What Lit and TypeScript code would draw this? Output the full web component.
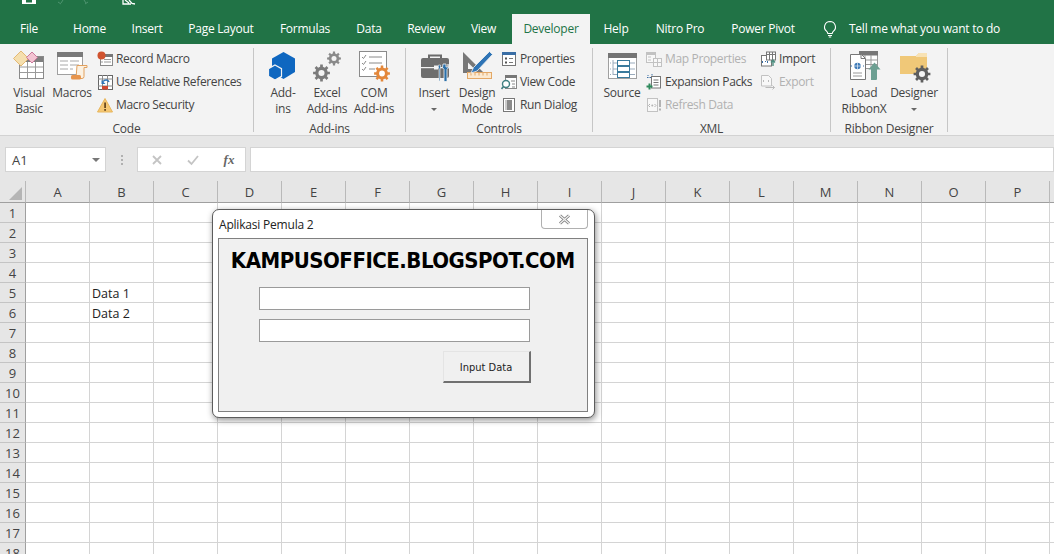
import { LitElement, html, css, svg } from "lit";
import { customElement } from "lit/decorators.js";

const gear = (cx: number, cy: number, r: number, color: string, hole = "#f3f3f3", teeth = 8) => {
  const pts: string[] = [];
  const ro = r, ri = r * 0.74;
  const step = (Math.PI * 2) / teeth;
  for (let i = 0; i < teeth; i++) {
    const a = i * step;
    const seq: [number, number][] = [
      [ri, a - step * 0.5],
      [ri, a - step * 0.28],
      [ro, a - step * 0.2],
      [ro, a + step * 0.2],
      [ri, a + step * 0.28],
    ];
    for (const [rad, an] of seq) pts.push(`${(cx + rad * Math.cos(an)).toFixed(2)},${(cy + rad * Math.sin(an)).toFixed(2)}`);
  }
  return svg`<polygon points=${pts.join(" ")} fill=${color}/><circle cx=${cx} cy=${cy} r=${r * 0.36} fill=${hole}/>`;
};

const I = {
  vb: svg`<rect x="6.5" y="6.5" width="24" height="22" fill="#fff" stroke="#8a8a8a"/><rect x="7" y="7" width="23" height="5" fill="#7f7f7f"/>
    <path d="M7 17h23M7 22.500h23M14.500 12v16M22.500 12v16" stroke="#9a9a9a" fill="none"/>
    <path d="M8 1l7.500 7.500L8 16 .5 8.500z" fill="#f5dfae" stroke="#e3b873"/><path d="M19 2l5.500 5.500L19 13l-5.500-5.500z" fill="#f3c3d2" stroke="#c9799a"/>`,
  macros: svg`<rect x="1.500" y="2.500" width="25" height="22" fill="#fff" stroke="#a0a0a0"/><rect x="1" y="2" width="26" height="5" fill="#7a7a7a"/>
    <path d="M4 11h8M14 11h9M4 15h8M14 15h9M4 19h8M14 19h3" stroke="#a8a8a8" fill="none"/>
    <path d="M21 15.500h10v2h-3v9a2 2 0 0 1-2 2H20z" fill="#fbf1e2" stroke="#e2a15f"/><rect x="15" y="25" width="10" height="4.500" rx="1.500" fill="#e8954c"/>`,
  rec: svg`<rect x="3.500" y="3.500" width="12" height="11" fill="#fff" stroke="#8a8a8a"/><rect x="3" y="3" width="13" height="3" fill="#777"/><path d="M7 8.500h7M7 11h7M4 11h2" stroke="#999"/><circle cx="4.500" cy="4.500" r="4" fill="#d0532f"/>`,
  rel: svg`<rect x="1.500" y="1.500" width="14" height="14" fill="#fff" stroke="#666"/><path d="M1 5h15M1 12h15M5.500 1v15M10.500 1v15" stroke="#8a8a8a"/><rect x="5" y="12" width="6" height="3.500" fill="#d0472f"/><path d="M6 7.500c2-2 5-2 6 .5" fill="none" stroke="#2e75b6" stroke-width="1.500"/><path d="M4.500 6v4h4z" fill="#2e75b6"/>`,
  warn: svg`<path d="M8 1.500L15.500 15h-15z" fill="#f5c773" stroke="#e8b65c"/><rect x="7.200" y="5.500" width="1.800" height="5.500" fill="#6a4a20"/><rect x="7.200" y="12" width="1.800" height="1.800" fill="#6a4a20"/>`,
  addins: svg`<path d="M16.500 2L28 8.500V22l-11.500 7L5 22V8.500z" fill="#0f67c0"/><path d="M8 15l6.500 3.700v7.600L8 30l-6.500-3.700v-7.600z" fill="#0f67c0" stroke="#f3f3f3" stroke-width="1.200"/>`,
  xl: svg`${gear(10.500, 23, 8.500, "#7b7b7b")}${gear(23, 8.500, 7, "#8a8a8a")}`,
  com: svg`<rect x="1.500" y="1.500" width="27" height="25" fill="#fff" stroke="#8a8a8a"/><path d="M4 7l1.500 1.500L8 5M4 13l1.500 1.500L8 11M4 19l1.500 1.500L8 17" stroke="#8a8a8a" fill="none"/><path d="M11 7h13M11 13h13M11 19h6" stroke="#8a8a8a" fill="none"/>${gear(24, 23.500, 8, "#e3873a", "#fff")}`,
  insert: svg`<path d="M11 9V5.500h12V9" fill="none" stroke="#6b6b6b" stroke-width="2"/><rect x="3" y="8" width="28" height="20" rx="2" fill="#6e6e6e"/><rect x="3" y="17" width="28" height="1.200" fill="#f3f3f3"/><rect x="16" y="15.500" width="4" height="4" fill="#f3f3f3"/>
    <path d="M25 14l-.5 3.500 1.500 2v12h3v-12l1.500-2L30 14v3h-2v-3z" fill="#2a6fa8" stroke="#f3f3f3" stroke-width=".8"/><path d="M20.500 15h2v3l-.5 1v12h-1V19l-.5-1z" fill="#2a6fa8" stroke="#f3f3f3" stroke-width=".6"/>`,
  design: svg`<path d="M2 2l21 21H2z" fill="#777"/><path d="M7 12.500l6.500 6.500H7z" fill="#f3f3f3"/><rect x="6.500" y="22.500" width="24" height="6" fill="#fbe9d0" stroke="#e3a866"/><path d="M10 23v2.500M14 23v2.500M18 23v2.500M22 23v2.500M26 23v2.500" stroke="#e3a866"/>
    <path d="M28.500 1.500l3 3L16 21l-6 2 2.500-5.500z" fill="#2f74b5" stroke="#f3f3f3" stroke-width=".8"/>`,
  props: svg`<rect x="1.500" y="1.500" width="13" height="13" fill="#fff" stroke="#777"/><rect x="1" y="1" width="14" height="3" fill="#3a6ea5"/><rect x="4" y="6.500" width="2" height="2" fill="#555"/><rect x="4" y="10.500" width="2" height="2" fill="#555"/><path d="M8 7.500h4M8 11.500h4" stroke="#777"/>`,
  code: svg`<rect x="4.500" y="1.500" width="11" height="13" fill="#fff" stroke="#888"/><rect x="4" y="1" width="12" height="3" fill="#777"/><path d="M10 7h4M11 10h3M11 13h3" stroke="#888"/><circle cx="5" cy="10" r="3.500" fill="#fff" stroke="#3f7f80" stroke-width="1.400"/><path d="M2.500 12.500L.5 15" stroke="#3f7f80" stroke-width="1.600"/>`,
  run: svg`<rect x="2.500" y="1.500" width="11" height="13" fill="#fff" stroke="#777"/><rect x="6" y="3" width="5" height="10" fill="#8a8a8a"/><rect x="4" y="3" width="2" height="10" fill="#ccc"/>`,
  source: svg`<rect x="2.500" y="3.500" width="28" height="25" fill="#fff" stroke="#a0a0a0"/><rect x="2" y="3" width="29" height="5" fill="#747474"/>
    <path d="M7 10v15M7 13h4M7 19h4M7 24.500h4M24 13h5M24 19h5M24 24.500h5M4 13h1M4 19h1M4 24.500h1" stroke="#9ab" fill="none"/><rect x="11.500" y="10.500" width="12" height="5" fill="#fff" stroke="#3a7a9c"/><rect x="11.500" y="16.500" width="12" height="5" fill="#fff" stroke="#3a7a9c"/><rect x="11.500" y="22.500" width="12" height="5" fill="#fff" stroke="#3a7a9c"/>`,
  map: svg`<g opacity=".45"><rect x=".5" y="1.500" width="9" height="10" fill="#fff" stroke="#888"/><rect y="1" width="10" height="3" fill="#888"/><path d="M2 6h3M2 9h3" stroke="#888"/><rect x="7.500" y="7.500" width="8" height="8" fill="#fff" stroke="#888"/><path d="M7.500 11.500h8M11.500 7.500v8" stroke="#888"/></g>`,
  exp: svg`<rect x="5.500" y="2.500" width="9" height="11.500" fill="#fff" stroke="#777"/><path d="M7.500 6h5M7.500 8.500h5M7.500 11h5" stroke="#777"/><path d="M1 3.500h4M2 1v1M6 0v2" stroke="#3a6ea5" stroke-dasharray="1.500 1"/><path d="M3.500 9.500v6M.5 12.500h6" stroke="#2f8a5c" stroke-width="2"/>`,
  refresh: svg`<g opacity=".45"><rect x="1.500" y="1.500" width="10" height="13" fill="#fff" stroke="#888"/><path d="M4 7l-1.500 1.500L4 10M8.500 7l1.500 1.500L8.500 10" stroke="#666" fill="none"/><circle cx="6.300" cy="8.500" r="1" fill="#666"/><rect x="13" y="3" width="2" height="7" fill="#666"/><rect x="13" y="11.500" width="2" height="2" fill="#666"/></g>`,
  imp: svg`<rect x="1.500" y="4.500" width="10" height="10.500" fill="#fff" stroke="#777"/><rect x="6.500" y="1" width="9" height="8" fill="#fff" stroke="#777"/><path d="M6.500 3.500h9M9.500 1v8M12.500 1v8" stroke="#777"/><path d="M3 10l-1 1 1 1M7 10l1 1-1 1" stroke="#3a6ea5" fill="none"/><path d="M5 10.500h1" stroke="#3a6ea5"/><path d="M13 15V10M11 11.500l2-2.500 2 2.500" stroke="#4d8d7f" stroke-width="1.400" fill="none"/>`,
  expo: svg`<g opacity=".45"><path d="M1.500 1.500h7l3 3V12h-10z" fill="#fff" stroke="#888"/><path d="M4 6l-1 1 1 1M8 6l1 1-1 1" stroke="#777" fill="none"/><path d="M5.500 13.500h9M12.500 11.500l2 2-2 2" stroke="#777" fill="none"/></g>`,
  load: svg`<rect x="11.500" y="1.500" width="18" height="17" fill="#fff" stroke="#999"/><rect x="11" y="1" width="19" height="4.500" fill="#777"/><path d="M11 10h19M11 14.500h19M17 5v14M23 5v14" stroke="#999"/>
    <path d="M2.500 4.500h11l4 4v21h-15z" fill="#fff" stroke="#777"/><path d="M13 4.500v4h4" fill="none" stroke="#777"/><circle cx="9.500" cy="16" r="3.200" fill="#3d7ab8"/><path d="M6.300 16h6.400M9.500 12.800v6.400" stroke="#fff" stroke-width=".6"/><path d="M4 16l-1.500 0M15 16l1 0" stroke="#3a6ea5"/><path d="M5 23h9M5 26h9" stroke="#999"/>
    <path d="M26.500 12.500l6 7h-3.500v9.500a1 1 0 0 1-1 1h-5v-10.500h-2.500z" fill="#6d9f92"/>`,
  designer: svg`<path d="M2 6h16l3-3h8v21H2z" fill="#f0c878"/><path d="M18 6l3-3h8v4H18z" fill="#f8e2b4"/>${gear(24, 24, 8.500, "#5f5f5f", "#f3f3f3")}`,
};

const big = (icon: unknown) => html`<svg class="big" viewBox="0 0 32 32" aria-hidden="true">${icon}</svg>`;
const small = (icon: unknown) => html`<svg class="small" viewBox="0 0 16 16" aria-hidden="true">${icon}</svg>`;
const caret = html`<span class="caret"></span>`;

const lg = (icon: unknown, l1: string, l2: unknown = "") =>
  html`<div class="lg">${big(icon)}<span class="tx">${l1}</span><span class="tx">${l2}</span></div>`;
const sm = (icon: unknown, label: string, off = false) =>
  html`<div class="sm ${off ? "off" : ""}">${small(icon)}<span>${label}</span></div>`;

const COLS = "ABCDEFGHIJKLMNOP".split("");
const TABS = ["File","Home","Insert","Page Layout","Formulas","Data","Review","View","Developer","Help","Nitro Pro","Power Pivot"];

@customElement("app-root")
export class AppRoot extends LitElement {
  static styles = css`
    :host { display: block; position: relative; width: 1054px; height: 554px; overflow: hidden; background: #fff;
      font-family: "Open Sans", "Noto Sans", sans-serif; font-size: 12px; color: #444; }
    .title { height: 14px; background: #217346; overflow: hidden; }
    .title svg { display: block; }
    .tabs { height: 30px; background: #217346; display: grid;
      grid-template-columns: 58px 63px 52px 96px 72px 56px 58px 57px 78px 52px 76px 90px 41px auto; color: #fff; }
    .tab { display: flex; align-items: center; justify-content: center; height: 30px; box-sizing: border-box; padding-bottom: 1px; letter-spacing: -.25px; }
    .tab.active { background: #f3f3f3; color: #217346; }
    .bulb { display: flex; align-items: center; justify-content: center; }
    .bulb svg { width: 16px; height: 18px; margin-left: 2px; }
    .tell { display: flex; align-items: center; padding-bottom: 1px; letter-spacing: -.25px; white-space: nowrap; }
    .ribbon { height: 92px; box-sizing: border-box; padding-top: 4px; background: #f3f3f3; border-bottom: 1px solid #d2d2d2; display: flex; }
    .group { height: 84px; border-right: 1px solid #c6c6c6; display: flex; flex-direction: column; }
    .body { height: 72px; display: flex; }
    .label { height: 12px; line-height: 18px; text-align: center; white-space: nowrap; letter-spacing: -.25px; }
    .g1 { width: 253px; } .g2 { width: 151px; } .g3 { width: 186px; } .g4 { width: 237px; } .g5 { width: 116px; }
    .g1 .body, .g2 .body, .g3 .body { padding-left: 8px; }
    .g4 .body { padding-left: 7px; } .g5 .body { padding-left: 9px; }
    .lg { display: flex; flex-direction: column; align-items: center; padding-top: 2px; white-space: nowrap; letter-spacing: -.25px; }
    .w40 { width: 40px; } .w42 { width: 42px; } .w44 { width: 44px; } .w46 { width: 46px; } .w48 { width: 48px; } .w52 { width: 52px; }
    .slot { display: flex; justify-content: center; }
    .big { width: 32px; height: 32px; flex: none; overflow: visible; }
    .tx { height: 16px; line-height: 16px; display: flex; align-items: center; justify-content: center; }
    .lg .big + .tx { margin-top: 3px; }
    .caret { display: block; width: 0; height: 0; border: 3px solid transparent; border-top: 3px solid #666; border-bottom: 0; }
    .col { display: flex; flex-direction: column; margin-top: -1px; }
    .col1 { padding-left: 3px; } .col3 { padding-left: 1px; } .col4a { width: 116px; padding-left: 2px; box-sizing: border-box; }
    .sm { height: 23px; display: flex; align-items: center; gap: 3px; white-space: nowrap; letter-spacing: -.35px; }
    .sm.off { color: #b1b1b1; }
    .small { width: 16px; height: 16px; flex: none; }
    .fbar { height: 45px; box-sizing: border-box; background: #e6e6e6; padding: 11px 0 9px 5px; display: flex; }
    .name { width: 101px; box-sizing: border-box; background: #fff; border: 1px solid #d4d4d4; display: flex; align-items: center; justify-content: space-between; padding: 0 5px 0 6px; font-size: 13px; }
    .name i { width: 0; height: 0; border: 4px solid transparent; border-top: 4px solid #777; border-bottom: 0; }
    .dots { width: 31px; display: flex; flex-direction: column; align-items: center; justify-content: center; gap: 2px; }
    .dots i { width: 2px; height: 2px; background: #b0b0b0; }
    .fbtn { width: 109px; box-sizing: border-box; background: #fff; border: 1px solid #d4d4d4; display: grid; grid-template-columns: 37px 36px 36px; align-items: center; justify-items: center; }
    .fbtn svg { width: 12px; height: 12px; }
    .fx { font-family: "Liberation Serif", serif; font-style: italic; font-size: 13px; color: #666; font-weight: bold; }
    .finput { margin-left: 4px; flex: 1; background: #fff; border: 1px solid #d4d4d4; }
    .sheet { display: grid; grid-template-columns: 26px repeat(17, 64px); grid-template-rows: 22px repeat(18, 20px); width: 1114px; }
    .corner { background: #e6e6e6; border-right: 1px solid #b9b9b9; border-bottom: 1px solid #9f9f9f; box-sizing: border-box; display: flex; align-items: flex-end; justify-content: flex-end; padding: 0 3px 2px 0; }
    .corner i { width: 0; height: 0; border-style: solid; border-width: 0 0 13px 13px; border-color: transparent transparent #b5b5b5 transparent; }
    .ch { background: #e6e6e6; border-right: 1px solid #b9b9b9; border-bottom: 1px solid #9f9f9f; box-sizing: border-box; display: flex; align-items: center; justify-content: center; font-size: 13px; }
    .rh { background: #e6e6e6; border-right: 1px solid #9f9f9f; border-bottom: 1px solid #c4c4c4; box-sizing: border-box; display: flex; align-items: center; justify-content: center; font-size: 13px; }
    .c { border-right: 1px solid #d4d4d4; border-bottom: 1px solid #d4d4d4; box-sizing: border-box; padding-left: 2px; line-height: 21px; font-size: 12.500px; color: #222; white-space: nowrap; }
    .dlg { position: absolute; left: 211.500px; top: 209px; width: 383px; height: 209px; box-sizing: border-box; background: #fff; border: 1px solid #5c5c5c; border-radius: 7px; box-shadow: 1px 2px 6px rgba(0,0,0,.45); padding: 0 6px 5px 5.500px; display: flex; flex-direction: column; color: #222; }
    .dlgtop { height: 28px; display: flex; justify-content: space-between; }
    .dlgtitle { padding: 6px 0 0 1px; line-height: 17px; font-size: 12px; letter-spacing: -.2px; }
    .close { width: 47px; height: 19px; box-sizing: border-box; border: 1px solid #b0b0b0; border-top: 0; border-radius: 0 0 4px 4px; display: flex; align-items: center; justify-content: center; }
    .close svg { width: 13px; height: 11px; }
    .client { flex: 1; background: #f0f0f0; border: 1px solid #808080; display: flex; flex-direction: column; align-items: flex-start; }
    .head { align-self: center; margin-top: 8px; height: 28px; line-height: 28px; font-family: "DejaVu Sans Condensed", "DejaVu Sans", sans-serif; font-stretch: condensed; font-weight: bold; font-size: 22px; letter-spacing: -.5px; color: #000; white-space: nowrap; }
    .in { width: 271px; height: 23px; box-sizing: border-box; background: #fff; border: 1px solid #9a9a9a; margin-left: 40px; }
    .in1 { margin-top: 12px; } .in2 { margin-top: 9px; }
    .btnrow { align-self: stretch; display: flex; justify-content: flex-end; padding-right: 56px; margin-top: 9px; }
    .btn { width: 88px; height: 32px; box-sizing: border-box; padding-top: 1px; background: #f0f0f0; border: 1px solid #e4e4e4; border-right: 2px solid #707070; border-bottom: 2px solid #707070; display: flex; align-items: center; justify-content: center; font-family: "DejaVu Sans Condensed", "DejaVu Sans", sans-serif; font-stretch: condensed; font-size: 11px; color: #222; }
  `;

  render() {
    return html`
      <div class="title">
        <svg width="1054" height="14" viewBox="0 0 1054 14" aria-hidden="true">
          <path d="M22 0h14v4H22z" fill="#fff"/><rect x="26" y="0" width="6" height="2.500" fill="#217346"/>
          <path d="M58 2l3 2M63 0l-2 3M88 2l-3 2M84 0l2 3" stroke="#4f9470" fill="none"/>
          <path d="M123 0v4h8M129 0l3 3.500 3 .5M125 0l4 3" stroke="#fff" stroke-width="1.300" fill="none"/>
        </svg>
      </div>
      <div class="tabs">
        ${TABS.map((t) => html`<div class="tab ${t === "Developer" ? "active" : ""}">${t}</div>`)}
        <div class="bulb"><svg viewBox="0 0 16 18" aria-hidden="true"><path d="M8 1.500a5.500 5.500 0 0 0-3.500 9.700c.8.700 1.200 1.500 1.300 2.300h4.400c.1-.8.500-1.600 1.300-2.300A5.500 5.500 0 0 0 8 1.500zM6 15.500h4M6.800 17h2.400" fill="none" stroke="#fff" stroke-width="1.100"/></svg></div>
        <div class="tell">Tell me what you want to do</div>
      </div>
      <div class="ribbon">
        <div class="group g1">
          <div class="body">
            <div class="w42 slot">${lg(I.vb, "Visual", "Basic")}</div>
            <div class="w44 slot">${lg(I.macros, "Macros")}</div>
            <div class="col col1">${sm(I.rec, "Record Macro")}${sm(I.rel, "Use Relative References")}${sm(I.warn, "Macro Security")}</div>
          </div>
          <div class="label">Code</div>
        </div>
        <div class="group g2">
          <div class="body">
            <div class="w42 slot">${lg(I.addins, "Add-", "ins")}</div>
            <div class="w46 slot">${lg(I.xl, "Excel", "Add-ins")}</div>
            <div class="w48 slot">${lg(I.com, "COM", "Add-ins")}</div>
          </div>
          <div class="label">Add-ins</div>
        </div>
        <div class="group g3">
          <div class="body">
            <div class="w40 slot">${lg(I.insert, "Insert", caret)}</div>
            <div class="w46 slot">${lg(I.design, "Design", "Mode")}</div>
            <div class="col col3">${sm(I.props, "Properties")}${sm(I.code, "View Code")}${sm(I.run, "Run Dialog")}</div>
          </div>
          <div class="label">Controls</div>
        </div>
        <div class="group g4">
          <div class="body">
            <div class="w44 slot">${lg(I.source, "Source")}</div>
            <div class="col col4a">${sm(I.map, "Map Properties", true)}${sm(I.exp, "Expansion Packs")}${sm(I.refresh, "Refresh Data", true)}</div>
            <div class="col">${sm(I.imp, "Import")}${sm(I.expo, "Export", true)}</div>
          </div>
          <div class="label">XML</div>
        </div>
        <div class="group g5">
          <div class="body">
            <div class="w48 slot">${lg(I.load, "Load", "RibbonX")}</div>
            <div class="w52 slot">${lg(I.designer, "Designer", caret)}</div>
          </div>
          <div class="label">Ribbon Designer</div>
        </div>
      </div>
      <div class="fbar">
        <div class="name"><span>A1</span><i></i></div>
        <div class="dots"><i></i><i></i><i></i></div>
        <div class="fbtn">
          <svg viewBox="0 0 12 12" aria-hidden="true"><path d="M2 2l8 8M10 2l-8 8" stroke="#c4c4c4" stroke-width="1.800"/></svg>
          <svg viewBox="0 0 12 12" aria-hidden="true"><path d="M1 6.500l3.500 3.500L11 2" stroke="#c4c4c4" stroke-width="1.800" fill="none"/></svg>
          <span class="fx">fx</span>
        </div>
        <div class="finput"></div>
      </div>
      <div class="sheet">
        <div class="corner"><i></i></div>
        ${COLS.map((c) => html`<div class="ch">${c}</div>`)}
        <div class="ch"></div>
        ${Array.from({ length: 18 }, (_, r) => html`
          <div class="rh">${r + 1}</div>
          ${COLS.map((c) => html`<div class="c">${c === "B" && r === 4 ? "Data 1" : c === "B" && r === 5 ? "Data 2" : ""}</div>`)}
          <div class="c"></div>
        `)}
      </div>
      <div class="dlg">
        <div class="dlgtop">
          <div class="dlgtitle">Aplikasi Pemula 2</div>
          <div class="close"><svg viewBox="0 0 13 11" aria-hidden="true"><path d="M2 1.500l9 8M11 1.500l-9 8" stroke="#777" stroke-width="3" fill="none"/><path d="M2 1.500l9 8M11 1.500l-9 8" stroke="#f0f0f0" stroke-width="1.400" fill="none"/></svg></div>
        </div>
        <div class="client">
          <div class="head">KAMPUSOFFICE.BLOGSPOT.COM</div>
          <div class="in in1"></div>
          <div class="in in2"></div>
          <div class="btnrow"><div class="btn">Input Data</div></div>
        </div>
      </div>
    `;
  }
}
